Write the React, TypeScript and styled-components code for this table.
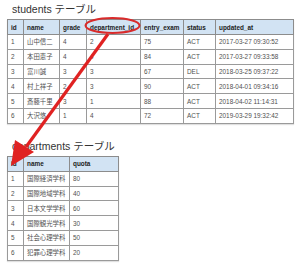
import { createGlobalStyle, styled } from 'styled-components';

const GlobalStyle = createGlobalStyle`
  html, body {
    margin: 0;
    padding: 0;
    background: #ffffff;
  }
  body {
    font-family: 'Liberation Sans', Arial, 'Noto Sans CJK JP', sans-serif;
  }
`;

type Column = { key: string; width: number };

const studentColumns: Column[] = [
  { key: 'id', width: 16 },
  { key: 'name', width: 36 },
  { key: 'grade', width: 27 },
  { key: 'department_id', width: 54 },
  { key: 'entry_exam', width: 43 },
  { key: 'status', width: 32 },
  { key: 'updated_at', width: 78 },
];

const students = [
  ['1', '山中信二', '4', '2', '75', 'ACT', '2017-03-27 09:30:52'],
  ['2', '本田恵子', '4', '4', '84', 'ACT', '2017-03-27 09:33:58'],
  ['3', '富川誠', '3', '3', '67', 'DEL', '2018-03-25 09:37:22'],
  ['4', '村上祥子', '2', '3', '90', 'ACT', '2018-04-01 09:34:16'],
  ['5', '斎藤千里', '3', '1', '88', 'ACT', '2018-04-02 11:14:31'],
  ['6', '大沢悠', '1', '4', '72', 'ACT', '2019-03-29 19:32:42'],
];

const departmentColumns: Column[] = [
  { key: 'id', width: 16 },
  { key: 'name', width: 46 },
  { key: 'quota', width: 49 },
];

const departments = [
  ['1', '国際経済学科', '80'],
  ['2', '国際地域学科', '40'],
  ['3', '日本文学学科', '60'],
  ['4', '国際観光学科', '30'],
  ['5', '社会心理学科', '50'],
  ['6', '犯罪心理学科', '20'],
];

function DataTable(props: { columns: Column[]; rows: string[][] }) {
  return (
    <S.Table>
      <colgroup>
        {props.columns.map((c) => (
          <col key={c.key} style={{ width: c.width }} />
        ))}
      </colgroup>
      <thead>
        <tr>
          {props.columns.map((c) => (
            <S.Th key={c.key}>{c.key}</S.Th>
          ))}
        </tr>
      </thead>
      <tbody>
        {props.rows.map((row, i) => (
          <S.Tr key={i}>
            {row.map((cell, j) => (
              <S.Td key={j}>{cell}</S.Td>
            ))}
          </S.Tr>
        ))}
      </tbody>
    </S.Table>
  );
}

export default function App() {
  return (
    <>
      <GlobalStyle />
      <S.Page>
        <S.Title>students テーブル</S.Title>
        <DataTable columns={studentColumns} rows={students} />
        <S.Title $gap>departments テーブル</S.Title>
        <DataTable columns={departmentColumns} rows={departments} />
        {/* red annotation: circle around department_id, arrow to departments.id */}
        <S.Markup width="300" height="266" viewBox="0 0 300 266">
          <ellipse
            cx="112.5"
            cy="25.5"
            rx="27"
            ry="7.5"
            fill="none"
            stroke="#d92b2b"
            strokeWidth="2"
          />
          <line
            x1="108"
            y1="34"
            x2="26"
            y2="147"
            stroke="#e02222"
            strokeWidth="3.2"
          />
          <polygon points="11,166 15,140 34,152" fill="#e02222" />
        </S.Markup>
      </S.Page>
    </>
  );
}

const S = {
  Page: styled.div`
    position: relative;
    width: 300px;
    height: 266px;
    padding: 3px 0 0 7px;
    box-sizing: border-box;
    overflow: hidden;
  `,
  Title: styled.div<{ $gap?: boolean }>`
    margin: ${(p) => (p.$gap ? '16px' : '0')} 0 4px 5px;
    height: 12px;
    font-size: 10.5px;
    line-height: 12px;
    color: #333333;
  `,
  Table: styled.table`
    border-collapse: collapse;
    table-layout: fixed;
    border: 1px solid #7d7d7d;
    font-size: 6.4px;
    box-shadow: 0 1px 1px rgba(0, 0, 0, 0.12);
  `,
  Th: styled.th`
    height: 14px;
    padding: 0 0 0 3px;
    background: #d2e3f3;
    border: 1px solid #8c8c8c;
    color: #1c1c1c;
    font-weight: bold;
    text-align: left;
    white-space: nowrap;
    overflow: hidden;
  `,
  Tr: styled.tr`
    height: 14.8px;
  `,
  Td: styled.td`
    padding: 0 0 0 3px;
    border: 1px solid #9a9a9a;
    color: #505050;
    white-space: nowrap;
    overflow: hidden;
  `,
  Markup: styled.svg`
    position: absolute;
    left: 0;
    top: 0;
    pointer-events: none;
  `,
};
